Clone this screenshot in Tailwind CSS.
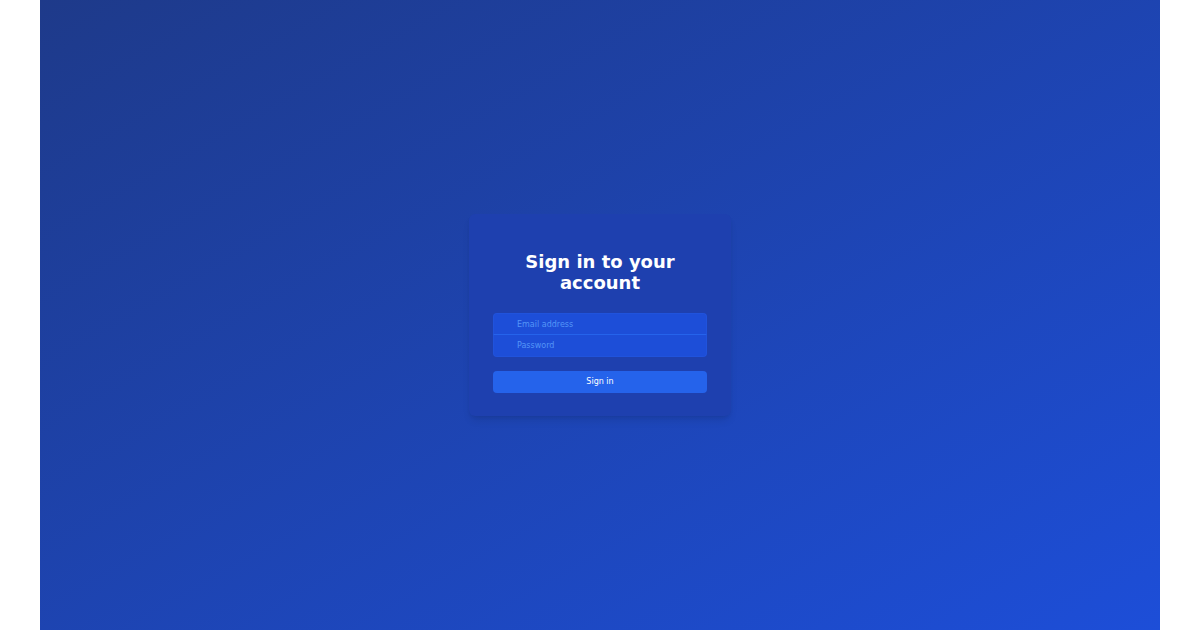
<!DOCTYPE html>
<html lang="en">
<head>
    <meta charset="UTF-8">
    <meta name="viewport" content="width=device-width, initial-scale=1.0">
    <script src="https://cdn.jsdelivr.net/npm/@tailwindcss/browser@4"></script>
    <title>Sign in</title>
</head>
<body class="bg-white px-10 font-['DejaVu_Sans',sans-serif]">

    <main class="min-h-screen flex items-center justify-center bg-linear-to-br/srgb from-[#1e3a8a] to-[#1d4ed8]">

        <!-- Login card -->
        <div class="w-full max-w-[262px] px-6 pt-[37px] pb-[23px] bg-[#1e40af] rounded-md shadow-[0_6px_9px_-2px_rgba(0,0,0,0.1),0_2px_4px_-2px_rgba(0,0,0,0.1)]">
            <h2 class="text-center text-[18px] leading-[21px] font-bold text-white">Sign in to your account</h2>

            <form class="mt-5" action="#" method="POST">
                <div>
                    <label for="email" class="sr-only">Email address</label>
                    <input id="email" name="email" type="email" placeholder="Email address" class="block w-full h-[22px] pl-[23px] pr-2 text-[8px] leading-[20px] text-white placeholder:text-[#5495f7] bg-[#1d4ed8] border border-[#2053dc] border-b-[#2563eb] rounded-t-[4px] focus:outline-none focus:border-[#60a5fa]">
                    <label for="password" class="sr-only">Password</label>
                    <input id="password" name="password" type="password" placeholder="Password" class="block w-full h-[22px] pl-[23px] pr-2 text-[8px] leading-[20px] text-white placeholder:text-[#5495f7] bg-[#1d4ed8] border border-t-0 border-[#2053dc] rounded-b-[4px] focus:outline-none focus:border-[#60a5fa]">
                </div>

                <button type="submit" class="mt-[14px] w-full h-[22px] flex items-center justify-center text-[8px] font-medium text-white bg-[#2563eb] rounded-[4px] hover:bg-[#3b82f6]">Sign in</button>
            </form>
        </div>
    </main>

</body>
</html>
